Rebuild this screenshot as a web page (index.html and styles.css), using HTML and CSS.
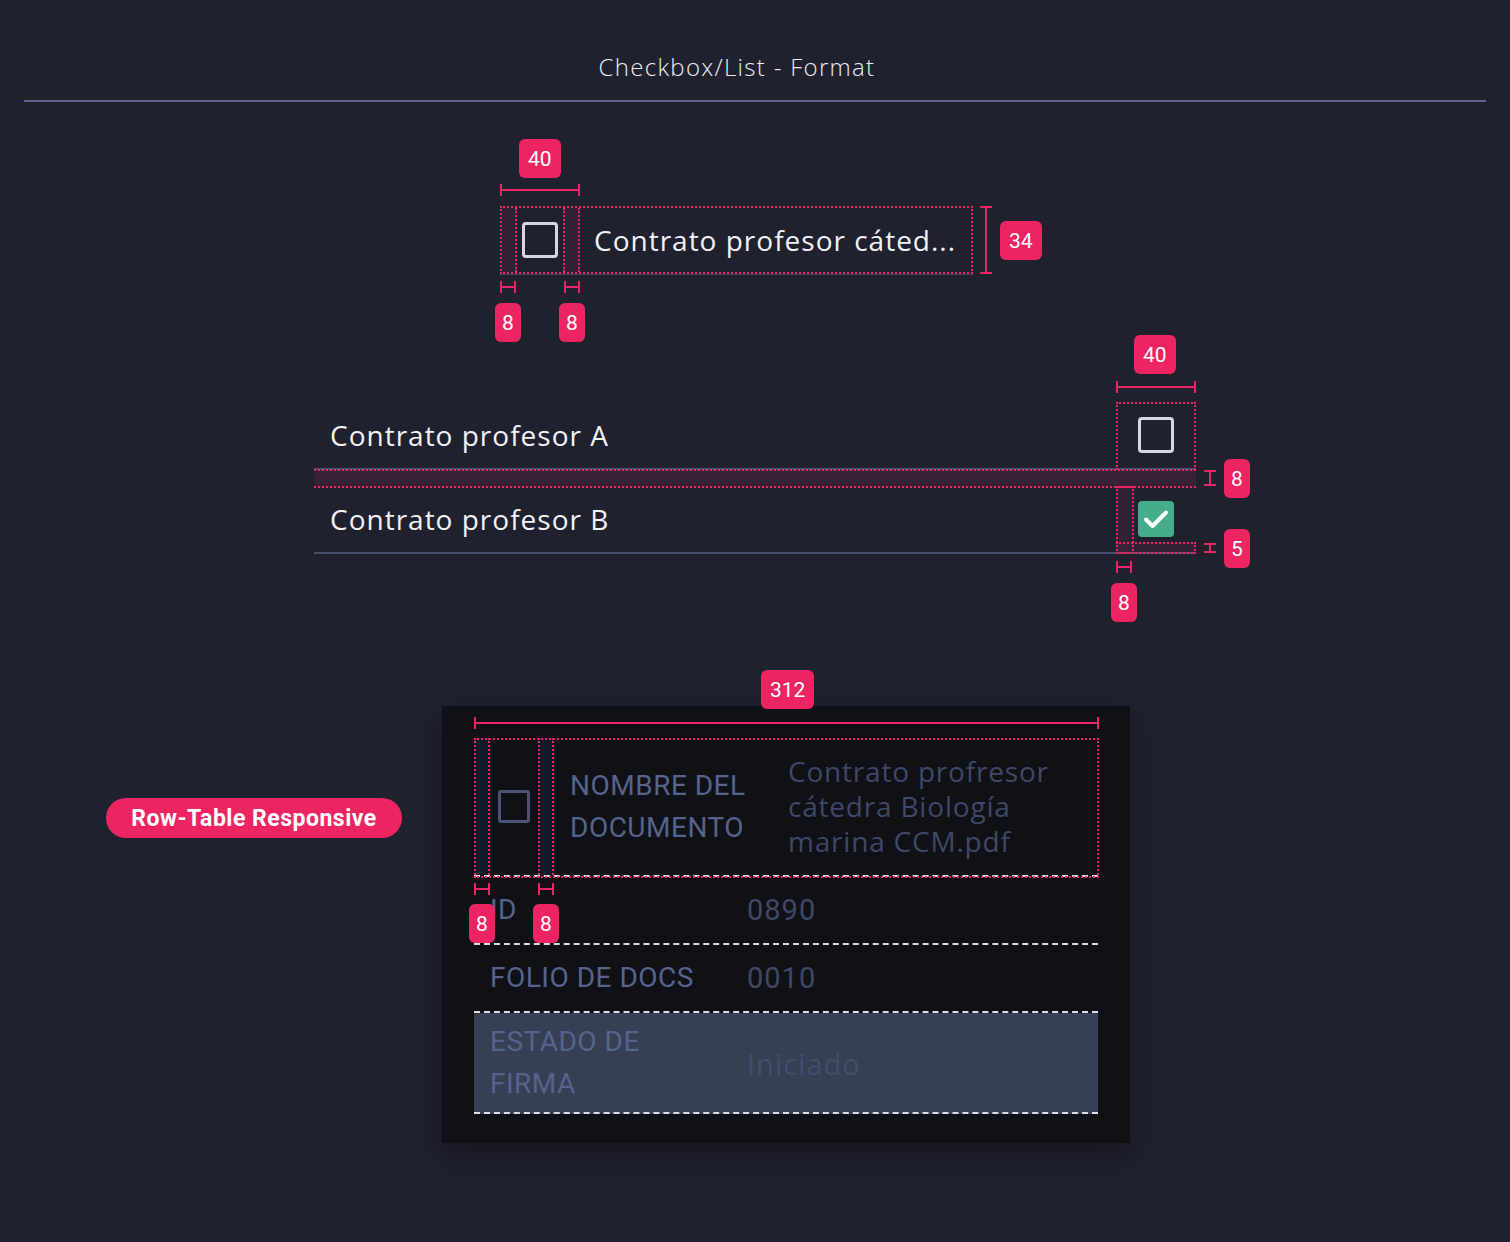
FILE: index.html
```html
<!DOCTYPE html>
<html lang="es">
<head>
    <meta charset="UTF-8">
    <meta name="viewport" content="width=device-width, initial-scale=1.0">
    <title>Checkbox/List - Format</title>
    <link rel="stylesheet" href="styles.css">
</head>
<body>

<div class="board">
    <header class="board-head">
        <h1>Checkbox/List - Format</h1>
    </header>

    <!-- Single item with checkbox -->
    <div class="spec spec-item">
        <div class="item">
            <span class="pad"></span>
            <span class="check-cell"><span class="checkbox"></span></span>
            <span class="pad"></span>
            <span class="item-text">Contrato profesor cáted...</span>
        </div>
    </div>
    <span class="tag" style="left:519px; top:139px;">40</span>
    <span class="dim dim-h" style="left:500px; top:189px; width:80px;"></span>
    <span class="tag" style="left:1000px; top:221px;">34</span>
    <span class="dim dim-v" style="left:985px; top:206px; height:68px;"></span>
    <span class="dim dim-h" style="left:500px; top:286px; width:16px;"></span>
    <span class="dim dim-h" style="left:564px; top:286px; width:16px;"></span>
    <span class="tag tag-sm" style="left:495px; top:303px;">8</span>
    <span class="tag tag-sm" style="left:559px; top:303px;">8</span>

    <!-- List rows -->
    <div class="spec spec-list">
        <div class="list-row">
            <span class="row-text">Contrato profesor A</span>
            <span class="row-check"><span class="checkbox"></span></span>
        </div>
        <div class="list-row">
            <span class="row-text">Contrato profesor B</span>
            <span class="row-check">
                <span class="checkbox is-checked">
                    <svg width="36" height="36" viewBox="0 0 36 36"><path d="M8 18.5 L14.5 25 L28 11.5" fill="none" stroke="#fff" stroke-width="4" stroke-linecap="round" stroke-linejoin="round"/></svg>
                </span>
            </span>
        </div>
        <span class="guide guide-band"></span>
        <span class="guide guide-cell"></span>
        <span class="guide guide-left"></span>
        <span class="guide guide-bottom"></span>
    </div>
    <span class="tag" style="left:1134px; top:335px;">40</span>
    <span class="dim dim-h" style="left:1116px; top:386px; width:80px;"></span>
    <span class="dim dim-v" style="left:1209px; top:470px; height:16px;"></span>
    <span class="tag tag-sm" style="left:1224px; top:459px;">8</span>
    <span class="dim dim-v" style="left:1209px; top:543px; height:10px;"></span>
    <span class="tag tag-sm" style="left:1224px; top:529px;">5</span>
    <span class="dim dim-h" style="left:1116px; top:566px; width:16px;"></span>
    <span class="tag tag-sm" style="left:1111px; top:583px;">8</span>

    <!-- Row-Table responsive -->
    <span class="pill">Row-Table Responsive</span>

    <div class="spec rt-card">
        <div class="rt-head">
            <span class="rt-pad"></span>
            <span class="rt-check"><span class="checkbox checkbox-dim"></span></span>
            <span class="rt-pad"></span>
            <span class="rt-label rt-head-label">NOMBRE DEL DOCUMENTO</span>
            <span class="rt-head-value">Contrato profresor cátedra Biología marina CCM.pdf</span>
            <span class="guide guide-head"></span>
        </div>
        <div class="rt-row">
            <span class="rt-label">ID</span>
            <span class="rt-value">0890</span>
        </div>
        <div class="rt-row">
            <span class="rt-label">FOLIO DE DOCS</span>
            <span class="rt-value">0010</span>
        </div>
        <div class="rt-row rt-row-active">
            <span class="rt-label">ESTADO DE FIRMA</span>
            <span class="rt-value rt-value-soft">Iniciado</span>
        </div>
    </div>
    <span class="tag" style="left:761px; top:670px;">312</span>
    <span class="dim dim-h" style="left:474px; top:722px; width:625px;"></span>
    <span class="dim dim-h" style="left:474px; top:888px; width:16px;"></span>
    <span class="dim dim-h" style="left:538px; top:888px; width:16px;"></span>
    <span class="tag tag-sm" style="left:469px; top:904px;">8</span>
    <span class="tag tag-sm" style="left:533px; top:904px;">8</span>
</div>

</body>
</html>
```

FILE: styles.css
```css
* {
    box-sizing: border-box;
}

body {
    margin: 0;
    background-color: #20212f;
    font-family: "Open Sans", sans-serif;
    color: #f1f1f6;
}

.board {
    position: relative;
    width: 1510px;
    height: 1242px;
    overflow: hidden;
}

.board-head {
    margin: 0 24px;
    height: 102px;
    padding-top: 32px;
    padding-right: 36px;
    border-bottom: 2px solid #5b6488;
    display: flex;
    align-items: center;
    justify-content: center;
}

.board-head h1 {
    margin: 0;
    font-size: 24px;
    font-weight: 300;
    letter-spacing: 1.3px;
    color: #ececf2;
}

/* Annotation tags and dimension lines */
.tag {
    position: absolute;
    height: 39px;
    min-width: 26px;
    padding: 0 9px;
    background-color: #ec2562;
    border-radius: 6px;
    color: #ffffff;
    font-family: Roboto, sans-serif;
    font-size: 21px;
    display: flex;
    align-items: center;
    justify-content: center;
    z-index: 5;
}

.tag-sm {
    padding: 0 6px;
}

.dim {
    position: absolute;
    background-color: #ec2562;
}

.dim::before,
.dim::after {
    content: "";
    position: absolute;
    background-color: #ec2562;
}

.dim-h {
    height: 2px;
}

.dim-h::before,
.dim-h::after {
    top: -5px;
    width: 2px;
    height: 12px;
}

.dim-h::before { left: 0; }
.dim-h::after { right: 0; }

.dim-v {
    width: 2px;
}

.dim-v::before,
.dim-v::after {
    left: -5px;
    width: 12px;
    height: 2px;
}

.dim-v::before { top: 0; }
.dim-v::after { bottom: 0; }

.guide {
    position: absolute;
    border: 2px dotted #ec2562;
    pointer-events: none;
}

.spec {
    position: absolute;
}

/* Checkbox */
.checkbox {
    display: block;
    width: 36px;
    height: 36px;
    border: 3px solid #d6d7e3;
    border-radius: 4px;
}

.checkbox.is-checked {
    border: none;
    background-color: #45ad8a;
}

.checkbox svg {
    display: block;
}

.checkbox-dim {
    width: 32px;
    height: 33px;
    border-color: #4b5475;
    border-radius: 3px;
}

/* Single item */
.spec-item {
    left: 500px;
    top: 206px;
}

.item {
    width: 473px;
    height: 68px;
    display: flex;
    align-items: stretch;
    border: 2px dotted #ec2562;
    box-shadow: 0 1px 0 #3a3f55;
}

.item .pad {
    width: 15px;
    background-color: rgba(236, 37, 98, 0.08);
}

.item .pad:first-child {
    border-right: 2px dotted #ec2562;
}

.item .pad:nth-child(3) {
    border-left: 2px dotted #ec2562;
    border-right: 2px dotted #ec2562;
    width: 17px;
}

.check-cell {
    width: 46px;
    display: flex;
    align-items: center;
    justify-content: center;
}

.item-text {
    flex: 1;
    min-width: 0;
    padding: 0 14px;
    font-size: 28px;
    letter-spacing: 1px;
    line-height: 64px;
    white-space: nowrap;
}

/* List */
.spec-list {
    left: 314px;
    top: 402px;
    width: 882px;
}

.list-row {
    height: 68px;
    display: flex;
    align-items: center;
    justify-content: space-between;
    border-bottom: 2px solid #474f6d;
}

.list-row + .list-row {
    margin-top: 16px;
}

.row-text {
    padding-left: 16px;
    font-size: 28px;
    letter-spacing: 1px;
}

.row-check {
    width: 80px;
    display: flex;
    justify-content: center;
}

.guide-band {
    left: 0;
    top: 67px;
    width: 882px;
    height: 19px;
    border-left: none;
    border-right: none;
    background-color: rgba(236, 37, 98, 0.12);
}

.guide-cell {
    left: 802px;
    top: 0;
    width: 80px;
    height: 68px;
    border-bottom: none;
}

.guide-left {
    left: 802px;
    top: 84px;
    width: 18px;
    height: 68px;
    background-color: rgba(236, 37, 98, 0.08);
}

.guide-bottom {
    left: 802px;
    top: 140px;
    width: 80px;
    height: 12px;
    background-color: rgba(236, 37, 98, 0.08);
}

/* Row-Table Responsive */
.pill {
    position: absolute;
    left: 106px;
    top: 798px;
    width: 296px;
    height: 40px;
    border-radius: 20px;
    background-color: #ec2562;
    color: #ffffff;
    font-family: Roboto, sans-serif;
    font-size: 23px;
    font-weight: 700;
    letter-spacing: 0.5px;
    display: flex;
    align-items: center;
    justify-content: center;
}

.rt-card {
    left: 442px;
    top: 706px;
    width: 688px;
    height: 437px;
    padding: 32px;
    background-color: #101117;
    box-shadow: 0 12px 28px rgba(0, 0, 0, 0.35);
}

.rt-head {
    position: relative;
    height: 139px;
    display: flex;
    align-items: stretch;
    border-bottom: 2px dashed #dcdde3;
}

.rt-pad {
    width: 16px;
    background-color: #0c1a2a;
    border-right: 2px dotted #ec2562;
}

.rt-pad:nth-child(3) {
    border-left: 2px dotted #ec2562;
}

.rt-check {
    width: 48px;
    display: flex;
    align-items: center;
    justify-content: center;
}

.rt-label {
    font-family: Roboto, sans-serif;
    font-size: 28px;
    letter-spacing: 0.5px;
    line-height: 42px;
    color: #56638b;
}

.rt-head-label {
    width: 218px;
    padding-left: 16px;
    align-self: center;
}

.rt-head-value {
    flex: 1;
    padding: 0 12px 0 16px;
    align-self: center;
    font-size: 28px;
    letter-spacing: 0.8px;
    line-height: 35px;
    color: #3f4866;
}

.guide-head {
    left: 0;
    top: 0;
    width: 625px;
    height: 140px;
}

.rt-row {
    display: grid;
    grid-template-columns: 257px 1fr;
    align-items: center;
    min-height: 68px;
    padding: 0 16px;
    border-bottom: 2px dashed #dcdde3;
}

.rt-row:nth-child(2) {
    min-height: 68px;
}

.rt-value {
    font-family: Roboto, sans-serif;
    font-size: 29px;
    letter-spacing: 1px;
    color: #3f4866;
}

.rt-row-active {
    min-height: 99px;
    padding-top: 8px;
    padding-bottom: 7px;
    background-color: #373f55;
}

.rt-row-active .rt-label {
    width: 200px;
}

.rt-value-soft {
    font-family: "Open Sans", sans-serif;
    color: #444d6a;
}
```
